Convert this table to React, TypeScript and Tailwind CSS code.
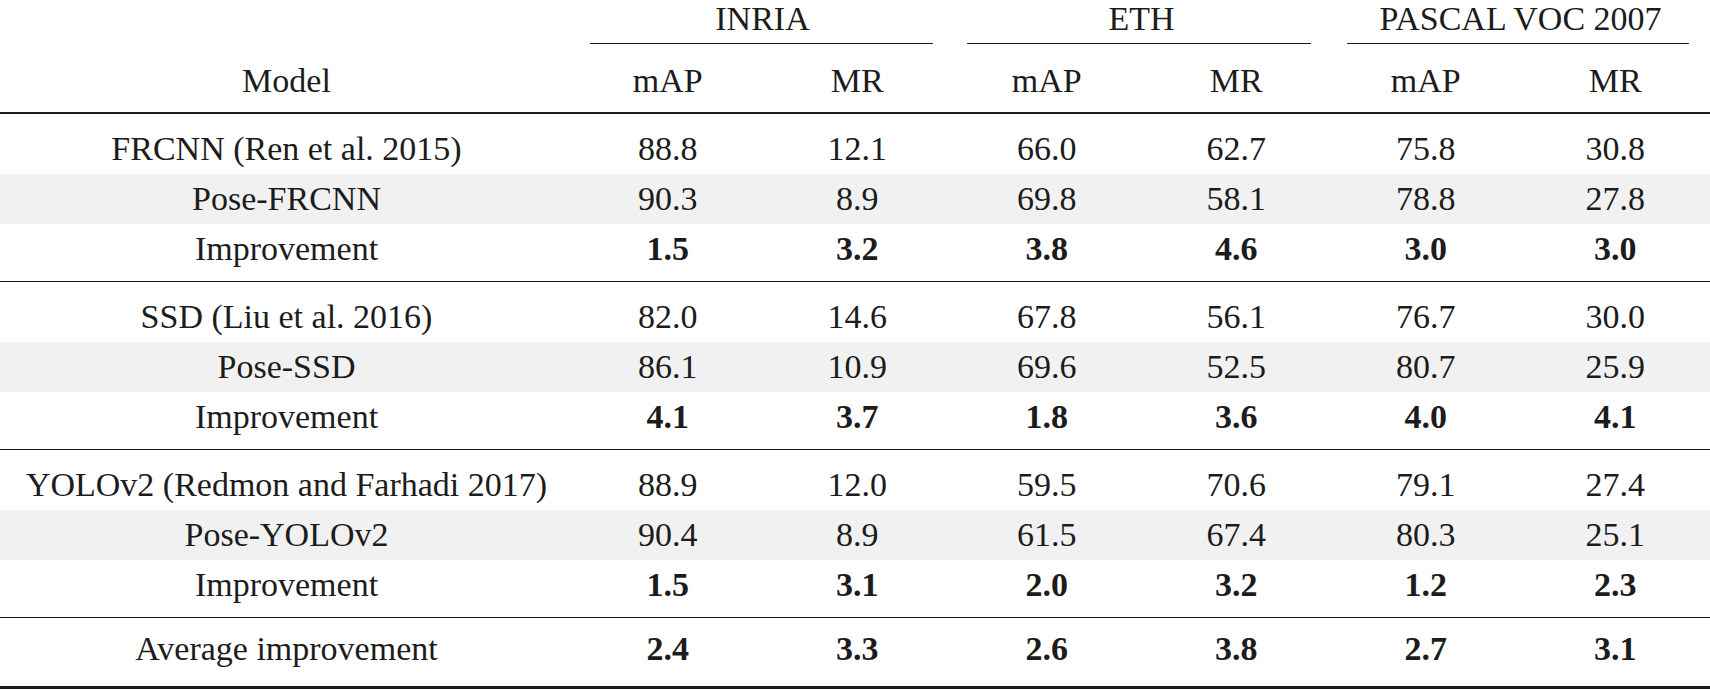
type Row = { name: string; vals: string[]; bold?: boolean; shaded?: boolean };

const groups: Row[][] = [
  [
    { name: 'FRCNN (Ren et al. 2015)', vals: ['88.8', '12.1', '66.0', '62.7', '75.8', '30.8'] },
    { name: 'Pose-FRCNN', vals: ['90.3', '8.9', '69.8', '58.1', '78.8', '27.8'], shaded: true },
    { name: 'Improvement', vals: ['1.5', '3.2', '3.8', '4.6', '3.0', '3.0'], bold: true },
  ],
  [
    { name: 'SSD (Liu et al. 2016)', vals: ['82.0', '14.6', '67.8', '56.1', '76.7', '30.0'] },
    { name: 'Pose-SSD', vals: ['86.1', '10.9', '69.6', '52.5', '80.7', '25.9'], shaded: true },
    { name: 'Improvement', vals: ['4.1', '3.7', '1.8', '3.6', '4.0', '4.1'], bold: true },
  ],
  [
    { name: 'YOLOv2 (Redmon and Farhadi 2017)', vals: ['88.9', '12.0', '59.5', '70.6', '79.1', '27.4'] },
    { name: 'Pose-YOLOv2', vals: ['90.4', '8.9', '61.5', '67.4', '80.3', '25.1'], shaded: true },
    { name: 'Improvement', vals: ['1.5', '3.1', '2.0', '3.2', '1.2', '2.3'], bold: true },
  ],
];

const average = ['2.4', '3.3', '2.6', '3.8', '2.7', '3.1'];

const grid = 'grid grid-cols-[573px_repeat(6,minmax(0,1fr))] text-center';

function DataRow({ row }: { row: Row }) {
  return (
    <div className={`${grid} h-[50px] leading-[50px] ${row.shaded ? 'bg-[#f1f1f1]' : ''}`}>
      <div className="whitespace-nowrap">{row.name}</div>
      {row.vals.map((v, i) => (
        <div key={i} className={row.bold ? 'font-bold' : ''}>
          {v}
        </div>
      ))}
    </div>
  );
}

export default function App() {
  return (
    <div className="w-[1710px] h-[690px] bg-white text-[#1c1c1c] text-[34px] overflow-hidden font-['Liberation_Serif','Times_New_Roman',serif]">
      {/* Dataset header */}
      <div className={`${grid} h-[43px] leading-[37px]`}>
        <div />
        <div className="col-span-2">INRIA</div>
        <div className="col-span-2">ETH</div>
        <div className="col-span-2">PASCAL VOC 2007</div>
      </div>
      <div className={grid}>
        <div />
        <div className="col-span-2 ml-[17px] mr-[19px] h-px bg-[#1c1c1c]" />
        <div className="col-span-2 ml-[15px] mr-[20px] h-px bg-[#1c1c1c]" />
        <div className="col-span-2 ml-[16px] mr-[21px] h-px bg-[#1c1c1c]" />
      </div>

      {/* Metric header */}
      <div className={`${grid} pt-[12px] pb-[6px] h-[68px] leading-[50px]`}>
        <div>Model</div>
        <div>mAP</div>
        <div>MR</div>
        <div>mAP</div>
        <div>MR</div>
        <div>mAP</div>
        <div>MR</div>
      </div>
      <div className="h-[2px] bg-[#1c1c1c]" />

      {groups.map((rows, gi) => (
        <div key={gi}>
          <div className="pt-[10px] pb-[7px]">
            {rows.map((r, ri) => (
              <DataRow key={ri} row={r} />
            ))}
          </div>
          <div className="h-px bg-[#1c1c1c]" />
        </div>
      ))}

      <div className="pt-[6px] pb-[12px]">
        <DataRow row={{ name: 'Average improvement', vals: average, bold: true }} />
      </div>
      <div className="h-[3px] bg-[#1c1c1c]" />
    </div>
  );
}
